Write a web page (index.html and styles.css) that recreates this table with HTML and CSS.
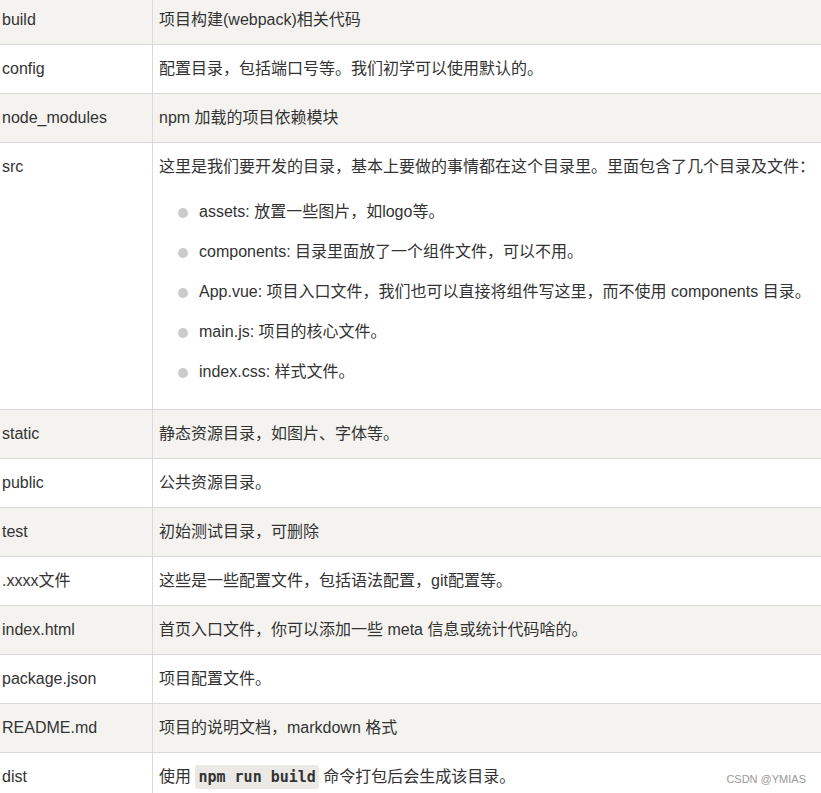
FILE: index.html
```html
<!DOCTYPE html>
<html lang="zh-CN">
<head>
<meta charset="utf-8">
<title>目录结构</title>
<link rel="stylesheet" href="styles.css">
</head>
<body>
<div class="page">
<table class="dirs">
<tbody>
<tr class="odd"><td class="name">build</td><td class="desc">项目构建(webpack)相关代码</td></tr>
<tr><td class="name">config</td><td class="desc">配置目录，包括端口号等。我们初学可以使用默认的。</td></tr>
<tr class="odd"><td class="name">node_modules</td><td class="desc">npm 加载的项目依赖模块</td></tr>
<tr><td class="name">src</td><td class="desc">
<p class="lead">这里是我们要开发的目录，基本上要做的事情都在这个目录里。里面包含了几个目录及文件：</p>
<ul class="files">
<li>assets: 放置一些图片，如logo等。</li>
<li>components: 目录里面放了一个组件文件，可以不用。</li>
<li>App.vue: 项目入口文件，我们也可以直接将组件写这里，而不使用 components 目录。</li>
<li>main.js: 项目的核心文件。</li>
<li>index.css: 样式文件。</li>
</ul>
</td></tr>
<tr class="odd"><td class="name">static</td><td class="desc">静态资源目录，如图片、字体等。</td></tr>
<tr><td class="name">public</td><td class="desc">公共资源目录。</td></tr>
<tr class="odd"><td class="name">test</td><td class="desc">初始测试目录，可删除</td></tr>
<tr><td class="name">.xxxx文件</td><td class="desc">这些是一些配置文件，包括语法配置，git配置等。</td></tr>
<tr class="odd"><td class="name">index.html</td><td class="desc">首页入口文件，你可以添加一些 meta 信息或统计代码啥的。</td></tr>
<tr><td class="name">package.json</td><td class="desc">项目配置文件。</td></tr>
<tr class="odd"><td class="name">README.md</td><td class="desc">项目的说明文档，markdown 格式</td></tr>
<tr><td class="name">dist</td><td class="desc">使用 <code class="cmd">npm run build</code> 命令打包后会生成该目录。</td></tr>
</tbody>
</table>
<div class="mark">CSDN @YMIAS</div>
</div>
</body>
</html>
```
FILE: styles.css
```css
html, body {
  margin: 0;
  padding: 0;
  background: #ffffff;
}
body {
  width: 821px;
  height: 793px;
  overflow: hidden;
  font-family: "Liberation Sans", Arial, "Noto Sans CJK SC", sans-serif;
  font-size: 16px;
  color: #333333;
  text-spacing-trim: space-all;
  font-feature-settings: "fwid" 1;
}
.page {
  position: relative;
  width: 821px;
  height: 793px;
  overflow: hidden;
}
.dirs {
  border-collapse: collapse;
  margin: -5px 0 0 -5px;
  width: 840px;
  table-layout: fixed;
}
.dirs td {
  border: 1px solid #d9d9d9;
  padding: 12px 6px;
  line-height: 24px;
  vertical-align: top;
  white-space: nowrap;
}
.dirs td.name {
  width: 144px;
}
.dirs tr.odd td {
  background: #f4f3f0;
}
.lead {
  margin: 0;
}
.files {
  list-style: none;
  margin: 21px 0 0 0;
  padding: 0 0 0 40px;
}
.files li {
  position: relative;
  line-height: 24px;
  margin-bottom: 16px;
}
.files li:last-child {
  margin-bottom: 13px;
}
.files li::before {
  content: "";
  position: absolute;
  left: -21px;
  top: 8px;
  width: 10px;
  height: 10px;
  border-radius: 50%;
  background: #cccccc;
}
.cmd {
  font-family: "DejaVu Sans Mono", "Liberation Mono", monospace;
  font-feature-settings: normal;
  font-weight: bold;
  font-size: 15px;
  background: #ebe9e6;
  color: #333333;
  border-radius: 3px;
  padding: 3px 3px;
}
.mark {
  position: absolute;
  right: 15px;
  bottom: 8px;
  font-size: 11px;
  color: #999999;
  font-family: "Liberation Sans", Arial, sans-serif;
}
```
